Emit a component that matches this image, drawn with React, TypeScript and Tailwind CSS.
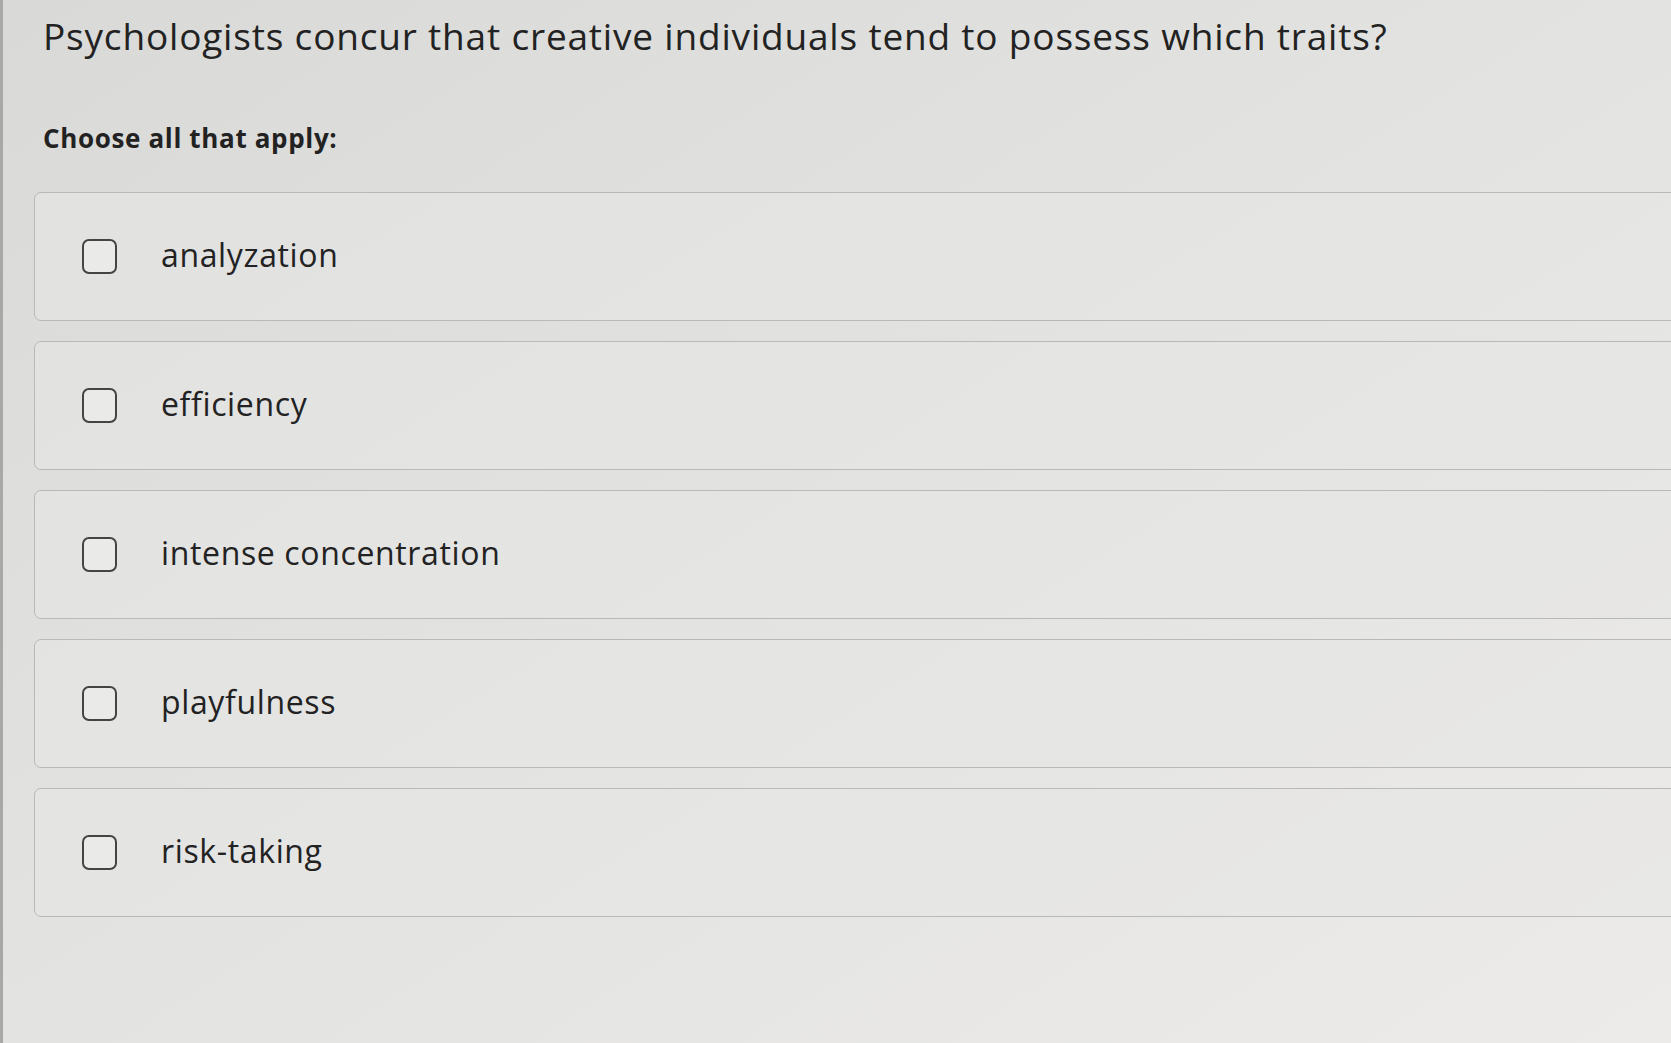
import React from "react";

const options = [
  "analyzation",
  "efficiency",
  "intense concentration",
  "playfulness",
  "risk-taking",
];

export default function App() {
  return (
    <div
      className="relative w-[1671px] h-[1043px] overflow-hidden bg-gradient-to-br from-[#d9d9d7] via-[#e3e3e1] to-[#ecebea] border-l-[3px] border-[#a8a8a6]"
      style={{ fontFamily: "'Open Sans', Lato, sans-serif" }}
    >
      <div className="pl-[40px] pt-[17px]">
        <h1 className="text-[37px] leading-none font-medium tracking-[0.022em] text-[#222222] whitespace-nowrap">
          Psychologists concur that creative individuals tend to possess which traits?
        </h1>
        <p className="mt-[71px] text-[26px] leading-none font-bold tracking-[0.025em] text-[#222222]">
          Choose all that apply:
        </p>
      </div>
      <div className="mt-[41px] ml-[31px] -mr-[20px] flex flex-col gap-[20px]">
        {options.map((o) => (
          <div
            key={o}
            className="h-[129px] flex items-center rounded-[7px] border-[1.5px] border-[#b9b9b7] bg-[#e6e6e4]/60 pl-[47px]"
          >
            <span className="w-[35px] h-[35px] rounded-[7px] border-[2.5px] border-[#444444] bg-[#eaeae8] shrink-0" />
            <span className="ml-[44px] -mt-[4px] text-[32px] leading-none font-medium tracking-[0.02em] text-[#222222]">
              {o}
            </span>
          </div>
        ))}
      </div>
    </div>
  );
}
